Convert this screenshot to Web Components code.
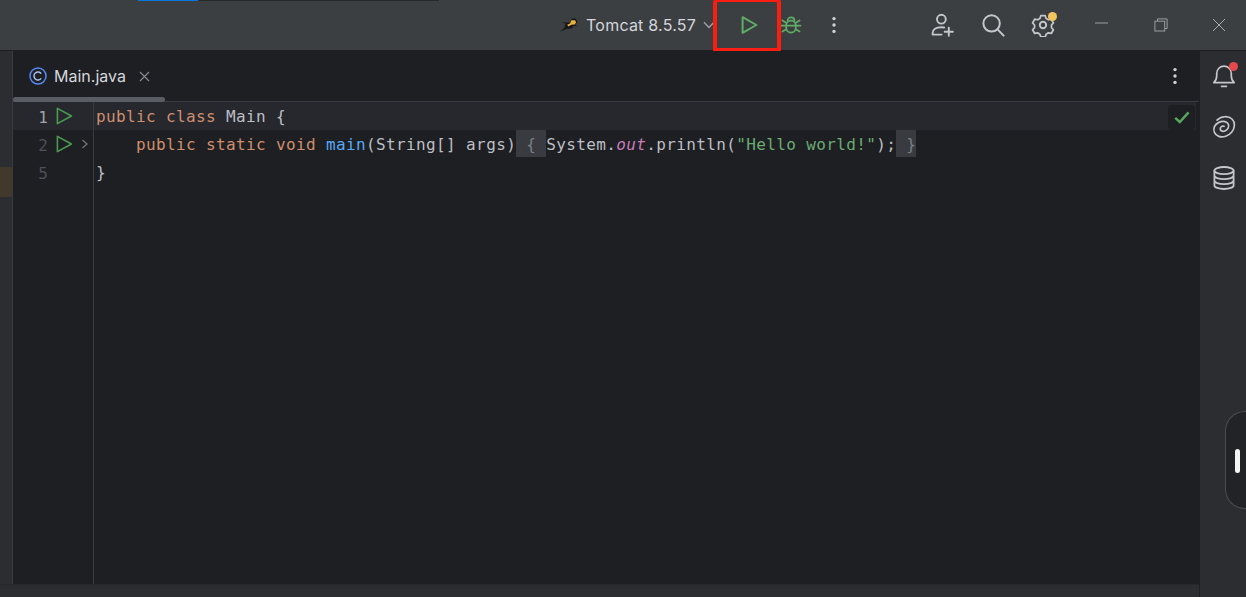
<!DOCTYPE html>
<html>
<head>
<meta charset="utf-8">
<title>Main.java</title>
<style>
  html, body { margin: 0; height: 100%; background: #1e1f22; overflow: hidden; }
</style>
</head>
<body>
<ide-window>
  <ide-titlebar></ide-titlebar>
  <ide-tabbar></ide-tabbar>
  <ide-editor>
    <code-line number="1" run current><code-tok k="kw">public class </code-tok><code-tok>Main {</code-tok></code-line>
    <code-line number="2" run fold><code-tok>    </code-tok><code-tok k="kw">public static void </code-tok><code-tok k="fn">main</code-tok><code-tok>(String[] args)</code-tok><code-tok k="folded"> { </code-tok><code-tok>System.</code-tok><code-tok k="field">out</code-tok><code-tok>.println(</code-tok><code-tok k="str">"Hello world!"</code-tok><code-tok>);</code-tok><code-tok k="folded"> }</code-tok></code-line>
    <code-line number="5"><code-tok>}</code-tok></code-line>
  </ide-editor>
  <ide-toolstrip></ide-toolstrip>
</ide-window>

<script>
  // Gedeelde iconen
  const ICONS = {
    run: '<svg width="20" height="20" viewBox="0 0 20 20" fill="none" stroke="#5fad65" stroke-width="2" stroke-linejoin="round"><path d="M3.6 2.2 17.4 10 3.6 17.8Z"/></svg>',
    debug: '<svg width="22" height="22" viewBox="0 0 22 22" fill="none" stroke="#5fad65" stroke-width="1.7" stroke-linecap="round"><path d="M7.6 6.4a3.4 3 0 0 1 6.8 0"/><rect x="6.2" y="6.6" width="9.6" height="12" rx="4.8"/><path d="M6.2 11.6h9.6M1.5 11.6h4.7M15.8 11.6h4.7M2.4 6.5l3.8 2.3M19.6 6.5l-3.8 2.3M2.4 17.5l4-2.2M19.6 17.5l-4-2.2"/></svg>',
    dots: '<svg width="6" height="18" viewBox="0 0 6 18" fill="#ced0d6"><circle cx="3" cy="2.6" r="1.7"/><circle cx="3" cy="9" r="1.7"/><circle cx="3" cy="15.4" r="1.7"/></svg>',
    user: '<svg width="24" height="24" viewBox="0 0 24 24" fill="none" stroke="#c4c6cc" stroke-width="1.9" stroke-linecap="round"><circle cx="10.4" cy="6.2" r="4.4"/><path d="M1.6 21.6v-1.4c0-3.8 3.4-6 8.8-6 1 0 2 .1 2.8.3M1.6 21.6h9M17.8 14.6v8.2M13.7 18.7h8.2"/></svg>',
    search: '<svg width="24" height="24" viewBox="0 0 24 24" fill="none" stroke="#c4c6cc" stroke-width="2" stroke-linecap="round"><circle cx="10.6" cy="10.4" r="8.2"/><path d="M16.6 16.4 22.6 22.6"/></svg>',
    gear: '<svg width="24" height="24" viewBox="0 0 24 24" fill="none" stroke="#c4c6cc" stroke-width="1.9" stroke-linejoin="round"><circle cx="12" cy="12" r="3.2"/><path d="M9.6 1.9h4.8l1 3 2.5 1.4 3.1-.6 2.3 4-2.1 2.3 0 2.9 2.1 2.3-2.3 4-3.1-.7-2.5 1.5-1 3H9.6l-1-3-2.5-1.5-3.1.7-2.3-4 2.1-2.3 0-2.9L.7 9.7l2.3-4 3.1.6 2.5-1.4Z" transform="translate(12 12) scale(.92) translate(-12 -12)"/></svg>',
    bell: '<svg width="24" height="24" viewBox="0 0 24 24" fill="none" stroke="#c4c6cc" stroke-width="1.7" stroke-linecap="round" stroke-linejoin="round"><path d="M1.8 18.6h20.4c-1.8-1.6-2.9-3.4-2.9-6.5V9.4A7.3 7.3 0 0 0 4.7 9.4v2.7c0 3.1-1.1 4.9-2.9 6.5Z"/><path d="M9.6 22.4h4.8"/></svg>',
    spiral: '<svg width="24" height="24" viewBox="0 0 24 24" fill="none" stroke="#c4c6cc" stroke-width="1.7" stroke-linecap="round"><path d="M5 5.2C9 1 16.4 .6 20 4c3.4 3.2 3 9-.2 13-3 3.8-8.8 6-13 4.4C2.6 19.8.8 15.4 2.4 11.6 4 8 9 5.6 13 6.6c3.4.9 4.6 4 3 6.8-1.4 2.4-4.6 3.6-6.6 2.4-1.6-1-1.4-3.2 0-4.2.8-.6 1.8-.7 2.6-.3"/></svg>',
    database: '<svg width="24" height="24" viewBox="0 0 24 24" fill="none" stroke="#c4c6cc" stroke-width="1.8"><ellipse cx="12" cy="4.6" rx="9.6" ry="3.6"/><path d="M2.4 4.6v14.8c0 2 4.3 3.6 9.6 3.6s9.6-1.6 9.6-3.6V4.6M2.4 9.6c0 2 4.3 3.6 9.6 3.6s9.6-1.6 9.6-3.6M2.4 14.6c0 2 4.3 3.6 9.6 3.6s9.6-1.6 9.6-3.6"/></svg>'
  };

  class IdeWindow extends HTMLElement {
    constructor() {
      super();
      this.attachShadow({ mode: 'open' });
      this.shadowRoot.innerHTML = `
        <style>
          :host {
            display: grid;
            position: relative;
            width: 1246px;
            height: 597px;
            overflow: hidden;
            grid-template-columns: 1fr 47px;
            grid-template-rows: 51px 51px 1fr 13px;
            background: #1e1f22;
            font-family: Inter, "Noto Sans", sans-serif;
          }
          ::slotted(ide-titlebar) { grid-column: 1 / 3; }
          ::slotted(ide-tabbar) { grid-column: 1; grid-row: 2; }
          ::slotted(ide-editor) { grid-column: 1; grid-row: 3; }
          ::slotted(ide-toolstrip) { grid-column: 2; grid-row: 2 / 5; }
          .status { grid-column: 1; grid-row: 4; background: #2b2d30; border-top: 1px solid #26282b; }
          .rail { grid-column: 1; grid-row: 2 / 4; width: 12px; background: #2b2d30; }
          .change { position: absolute; left: 0; top: 167px; width: 12px; height: 30px; background: #42382b; }
        </style>
        <slot></slot>
        <div class="rail"></div>
        <div class="status"></div>
        <div class="change"></div>`;
    }
  }

  class IdeTitlebar extends HTMLElement {
    constructor() {
      super();
      this.attachShadow({ mode: 'open' });
      this.shadowRoot.innerHTML = `
        <style>
          :host {
            display: flex;
            position: relative;
            align-items: center;
            height: 51px;
            box-sizing: border-box;
            background: #3c3f41;
            border-bottom: 1px solid #1e1f22;
            padding-left: 560px;
            color: #d4d6dc;
            font-size: 16px;
          }
          .config { display: flex; align-items: center; width: 158px; flex: none; }
          .config svg:first-child { margin-right: 8px; }
          .name { width: 117px; white-space: nowrap; letter-spacing: .23px; }
          .btn { display: flex; align-items: center; justify-content: center; flex: none; height: 50px; }
          .run { width: 42px; margin-left: 10px; }
          .debug { width: 42px; }
          .dots { width: 42px; margin-left: 1px; }
          .user { width: 50px; margin-left: 63px; }
          .search { width: 50px; }
          .gear { width: 50px; position: relative; }
          .badge { position: absolute; top: 12px; left: 30px; width: 9px; height: 9px; border-radius: 50%; background: #f2c55c; }
          .win { width: 58.5px; }
          .win-min { margin-left: 5px; }
          /* voortgangsbalk bovenaan en rode markering liggen over de balk heen */
          .progress { position: absolute; left: 138px; top: 0; width: 301px; height: 1px; background: #2a2a2a; }
          .progress i { display: block; width: 60px; height: 1px; background: #0a78d8; }
          .mark {
            position: absolute; left: 713px; top: 0; width: 68px; height: 52px;
            box-sizing: border-box; border: 4px solid #fb1c12; border-top-width: 2px; border-radius: 2px;
          }
        </style>
        <div class="progress"><i></i></div>
        <div class="config">
          <svg width="18" height="14" viewBox="0 0 18 14">
            <path d="M0 13.4 4.4 10 5.4 5.6 1 4.2 6 4.4 10 4.6 12 .6h3.8l1.6 3.6-2.4 2.6 2.6 1.4-4-.4-2 2.6-4.4.4Z" fill="#17161a"/>
            <path d="M11.4 2.2h3.8l.9 2.4-1.6 2-3.2.2L8.4 8.4 7.2 6.8 10 5.4Z" fill="#e6b13c"/>
          </svg>
          <span class="name">Tomcat 8.5.57</span>
          <svg width="12" height="8" viewBox="0 0 12 8" fill="none" stroke="#9da0a8" stroke-width="1.4"><path d="M1 1.2 6 6.4 11 1.2"/></svg>
        </div>
        <div class="btn run">${ICONS.run}</div>
        <div class="btn debug">${ICONS.debug}</div>
        <div class="btn dots">${ICONS.dots}</div>
        <div class="btn user">${ICONS.user}</div>
        <div class="btn search">${ICONS.search}</div>
        <div class="btn gear">${ICONS.gear}<span class="badge"></span></div>
        <div class="btn win win-min"><svg width="14" height="6" viewBox="0 0 14 6" style="margin-top:-4px"><path d="M0 3h13" stroke="#9a9ca1" stroke-width="1"/></svg></div>
        <div class="btn win"><svg width="14" height="14" viewBox="0 0 14 14" fill="none" stroke="#9a9ca1"><path d="M3.5 3V.9h9.6v9.6H11"/><rect x=".9" y="3.2" width="9.8" height="9.8"/></svg></div>
        <div class="btn win"><svg width="14" height="14" viewBox="0 0 14 14" stroke="#a8aaae"><path d="M1 1l12 12M13 1 1 13"/></svg></div>
        <div class="mark"></div>`;
    }
  }

  class IdeTabbar extends HTMLElement {
    constructor() {
      super();
      this.attachShadow({ mode: 'open' });
      this.shadowRoot.innerHTML = `
        <style>
          :host {
            display: flex;
            position: relative;
            align-items: center;
            height: 51px;
            box-sizing: border-box;
            margin-left: 12px;
            border-left: 1px solid #393b40;
            border-bottom: 1px solid #393b40;
            background: #1e1f22;
            padding: 0 21px 0 16px;
            color: #d4d6dc;
            font-size: 16px;
          }
          .icon { width: 18px; height: 18px; margin-right: 7px; flex: none; }
          .close { margin-left: 13px; }
          .dots { margin-left: auto; display: flex; }
          .thumb { position: absolute; left: 0; top: 46px; width: 152px; height: 5px; border-radius: 3px; background: #5a5d63; }
        </style>
        <svg class="icon" viewBox="0 0 18 18" fill="none" stroke="#548af7" stroke-width="1.5">
          <circle cx="9" cy="9" r="8"/>
          <path d="M12.2 6.6A4 4 0 1 0 12.2 11.4" stroke="#a9c4f8" stroke-width="1.4"/>
        </svg>
        <span>Main.java</span>
        <svg class="close" width="11" height="11" viewBox="0 0 11 11" stroke="#868a91" stroke-width="1.2"><path d="M1 1l9 9M10 1 1 10"/></svg>
        <span class="dots">${ICONS.dots}</span>
        <div class="thumb"></div>`;
    }
  }

  class IdeEditor extends HTMLElement {
    constructor() {
      super();
      this.attachShadow({ mode: 'open' });
      this.shadowRoot.innerHTML = `
        <style>
          :host {
            display: flex;
            flex-direction: column;
            position: relative;
            margin-left: 12px;
            border-left: 1px solid #393b40;
            background: #1e1f22;
            padding-right: 3px;
            overflow: hidden;
          }
          .guide { position: absolute; left: 80px; top: 0; bottom: 0; width: 1px; background: #393b40; }
          .ok {
            position: absolute; right: 4px; top: 3px; width: 27px; height: 25px;
            display: flex; align-items: center; justify-content: center;
            background: #1e1f22; border-radius: 4px;
          }
        </style>
        <slot></slot>
        <div class="guide"></div>
        <div class="ok">
          <svg width="16" height="13" viewBox="0 0 16 13" fill="none" stroke="#57a85f" stroke-width="2.4"><path d="M1.2 6.8 5.8 11 14.6 1.4"/></svg>
        </div>`;
    }
  }

  class CodeLine extends HTMLElement {
    constructor() {
      super();
      this.attachShadow({ mode: 'open' });
    }
    connectedCallback() {
      const run = this.hasAttribute('run')
        ? '<svg width="18" height="18" viewBox="0 0 18 18" fill="none" stroke="#4b9a50" stroke-width="1.6" stroke-linejoin="round"><path d="M2.4 1.4 16.4 9 2.4 16.6Z"/></svg>' : '';
      const fold = this.hasAttribute('fold')
        ? '<svg width="8" height="10" viewBox="0 0 8 10" fill="none" stroke="#6f737a" stroke-width="1.3"><path d="M1.5 1 6 5 1.5 9"/></svg>' : '';
      this.shadowRoot.innerHTML = `
        <style>
          :host {
            display: flex;
            height: 28px;
            align-items: center;
            font-family: "DejaVu Sans Mono", "Liberation Mono", monospace;
            font-size: 16px;
            color: #bcbec4;
          }
          :host([current]) { background: #26282e; }
          .num {
            width: 35px;
            text-align: right;
            color: #4b5059;
            font-size: 16px;
            flex: none;
            padding-top: 2px;
          }
          :host([current]) .num { color: #a1a3ab; }
          .run { width: 18px; margin-left: 7px; display: flex; flex: none; }
          .fold { width: 8px; margin-left: 8px; display: flex; flex: none; margin-right: 7px; }
          code {
            font: inherit;
            white-space: pre;
            letter-spacing: .37px;
            display: flex;
            height: 28px;
            align-items: center;
            flex: none;
          }
        </style>
        <span class="num">${this.getAttribute('number')}</span>
        <span class="run">${run}</span>
        <span class="fold">${fold}</span>
        <code><slot></slot></code>`;
    }
  }

  class CodeTok extends HTMLElement {
    constructor() {
      super();
      this.attachShadow({ mode: 'open' });
      // geen witruimte in de shadow root: white-space: pre erft mee
      this.shadowRoot.innerHTML = '<style>'
        + ':host { display: inline-block; line-height: 29px; height: 27px; margin-top: -1px; }'
        + ':host([k="kw"]) { color: #cf8e6d; }'
        + ':host([k="fn"]) { color: #56a8f5; }'
        + ':host([k="str"]) { color: #6aab73; }'
        + ':host([k="field"]) { color: #c77dbb; font-style: italic; }'
        + ':host([k="folded"]) { color: #7a7e85; background: #393b40; }'
        + '</style><slot></slot>';
    }
  }

  class IdeToolstrip extends HTMLElement {
    constructor() {
      super();
      this.attachShadow({ mode: 'open' });
      this.shadowRoot.innerHTML = `
        <style>
          :host {
            display: flex;
            flex-direction: column;
            align-items: center;
            position: relative;
            background: #2b2d30;
            border-left: 1px solid #1e1f22;
            box-sizing: border-box;
            padding-top: 13px;
            padding-left: 1px;
            gap: 27px;
          }
          .item { position: relative; display: flex; height: 24px; }
          .dot { position: absolute; top: -2px; right: -2px; width: 9px; height: 9px; border-radius: 50%; background: #e5484d; }
          .handle {
            position: absolute; right: 0; top: 360px; width: 21px; height: 98px;
            box-sizing: border-box;
            background: #222327; border: 1px solid #4a4c50; border-right: none;
            border-radius: 20px 0 0 20px;
          }
          .handle i { position: absolute; left: 9px; top: 37px; width: 5px; height: 24px; border-radius: 3px; background: #f4f4f4; }
        </style>
        <div class="item">${ICONS.bell}<span class="dot"></span></div>
        <div class="item">${ICONS.spiral}</div>
        <div class="item">${ICONS.database}</div>
        <div class="handle"><i></i></div>`;
    }
  }

  customElements.define('ide-window', IdeWindow);
  customElements.define('ide-titlebar', IdeTitlebar);
  customElements.define('ide-tabbar', IdeTabbar);
  customElements.define('ide-editor', IdeEditor);
  customElements.define('code-line', CodeLine);
  customElements.define('code-tok', CodeTok);
  customElements.define('ide-toolstrip', IdeToolstrip);
</script>
</body>
</html>
